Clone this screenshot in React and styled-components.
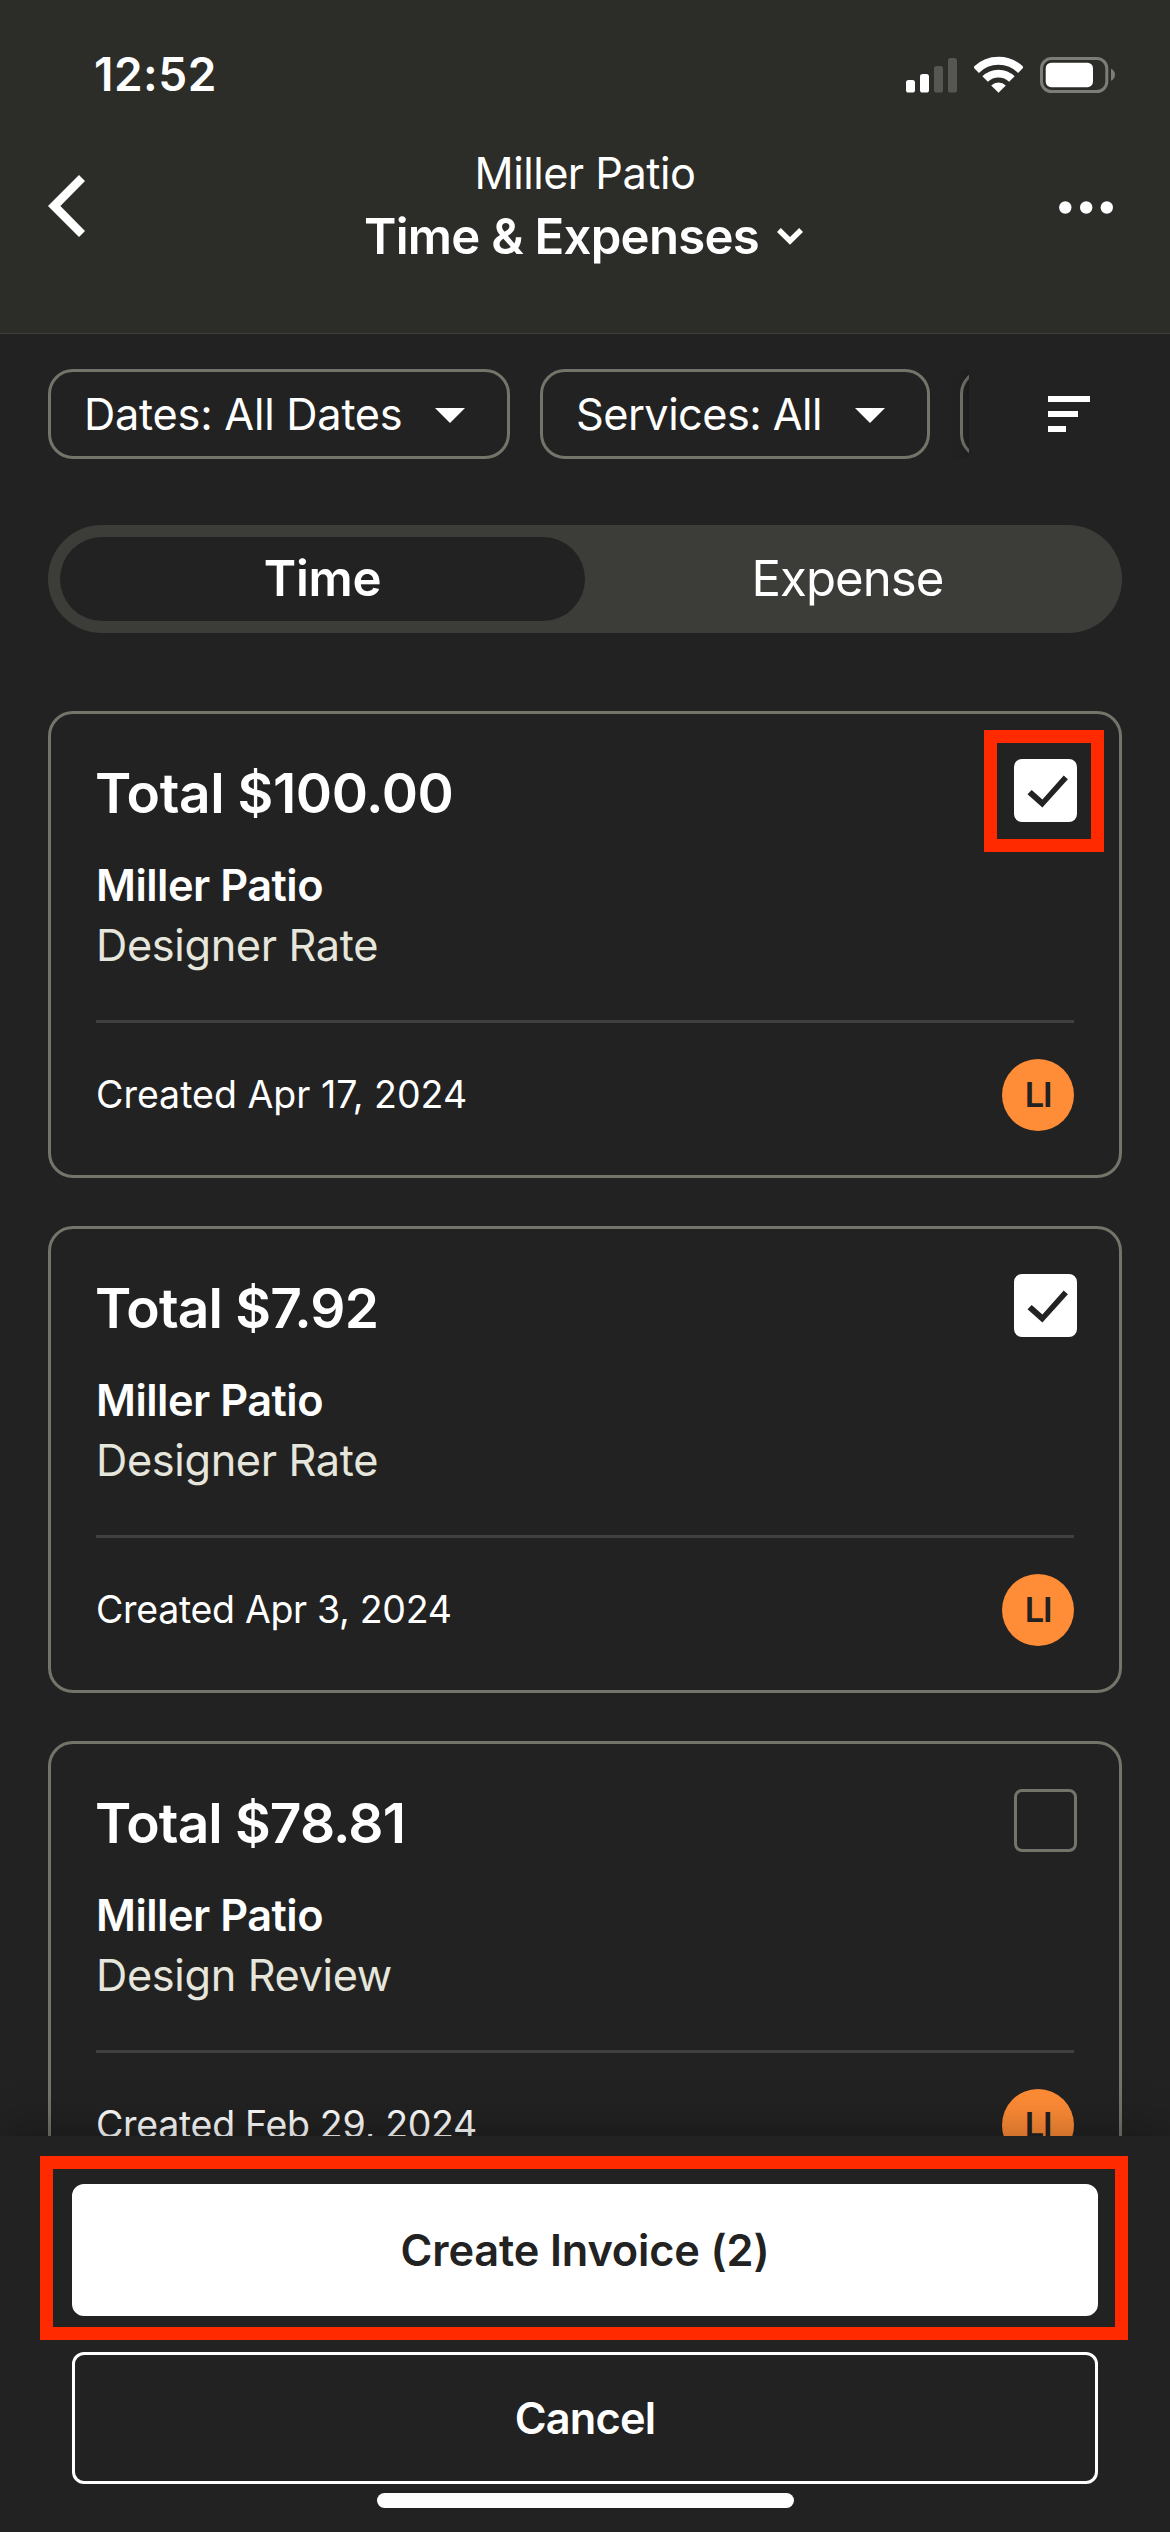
import React from 'react';
import styled, { createGlobalStyle, css } from 'styled-components';

const color = {
  page: '#222222',
  header: '#2c2c29',
  headerLine: '#3f3f3a',
  outline: '#74746b',
  track: '#3c3c38',
  divider: '#40403f',
  muted: '#e6e6dc',
  avatar: '#ff8c36',
  highlight: '#ff2a00',
};

const GlobalStyle = createGlobalStyle`
  *, *::before, *::after { box-sizing: border-box; }
  body {
    margin: 0;
    background: ${color.page};
    color: #fff;
    font-family: Inter, 'Liberation Sans', sans-serif;
  }
  button {
    font: inherit;
    color: inherit;
    background: none;
    border: 0;
    padding: 0;
    margin: 0;
  }
`;

const Screen = styled.div`
  display: flex;
  flex-direction: column;
  width: 1170px;
  height: 2532px;
  overflow: hidden;
  background: ${color.page};
`;

const Label = styled.span`
  display: block;
  font-size: ${p => p.$size || 43.3}px;
  font-weight: ${p => (p.$bold ? 600 : 400)};
  letter-spacing: ${p => p.$track || 0}px;
  line-height: ${p => (p.$line ? `${p.$line}px` : '1.2')};
  color: ${p => p.$color || 'inherit'};
  white-space: nowrap;
`;

/* Header */
const Header = styled.header`
  flex: none;
  height: 334px;
  background: ${color.header};
  border-bottom: 1px solid ${color.headerLine};
`;

const StatusBar = styled.div`
  display: flex;
  align-items: center;
  justify-content: space-between;
  height: 141px;
  padding: 8px 55px 0 94px;
`;

const StatusIcons = styled.div`
  display: flex;
  align-items: center;
  gap: 17px;
  svg { display: block; }
`;

const NavBar = styled.nav`
  display: grid;
  grid-template-columns: 200px 1fr 200px;
  align-items: center;
  height: 130px;
`;

const NavButton = styled.button`
  display: flex;
  justify-content: ${p => (p.$end ? 'flex-end' : 'flex-start')};
  padding: ${p => (p.$end ? '2px 57px 0 0' : '0 0 0 48px')};
`;

const NavTitle = styled.div`
  display: flex;
  flex-direction: column;
  align-items: center;
  padding-bottom: 3px;
`;

const NavMenu = styled.button`
  display: flex;
  align-items: center;
  gap: 18px;
  margin-left: -3px;
`;

/* Filters */
const FilterRow = styled.div`
  flex: none;
  display: flex;
  height: 90px;
  margin-top: 35px;
  padding-left: 48px;
  overflow: hidden;
`;

const ChipScroller = styled.div`
  display: flex;
  gap: 30px;
  width: 921px;
  overflow: hidden;
`;

const Chip = styled.button`
  flex: none;
  display: flex;
  align-items: center;
  justify-content: space-between;
  width: ${p => p.$width}px;
  height: 90px;
  padding: 2px 42px 0 33px;
  border: 3px solid ${color.outline};
  border-radius: 25px;
`;

const SortButton = styled.button`
  flex: 1;
  display: flex;
  align-items: center;
  padding-left: 79px;
  background: ${color.page};
  box-shadow: 0 0 15px rgba(0, 0, 0, 0.35);
`;

/* Segmented control */
const Segmented = styled.div`
  flex: none;
  display: flex;
  height: 108px;
  margin: 66px 48px 78px;
  padding: 12px;
  border-radius: 54px;
  background: ${color.track};
`;

const Segment = styled.button`
  flex: 1;
  display: flex;
  align-items: center;
  justify-content: center;
  padding-bottom: 1px;
  border-radius: 42px;
  ${p => p.$active && css`background: ${color.page};`}
`;

/* Cards */
const List = styled.main`
  flex: 1;
  min-height: 0;
  display: flex;
  flex-direction: column;
  gap: 48px;
  padding: 0 48px;
  overflow: hidden;
`;

const Card = styled.article`
  flex: none;
  display: flex;
  flex-direction: column;
  padding: 45px 45px 44px;
  border: 3px solid ${color.outline};
  border-radius: 25px;
`;

const CardTop = styled.div`
  display: flex;
  align-items: flex-start;
  justify-content: space-between;
  height: 96px;
  margin: 0 -3px 0 -1px;
`;

const CardFooter = styled.div`
  display: flex;
  align-items: center;
  justify-content: space-between;
  margin-top: 45px;
  padding-top: 36px;
  border-top: 3px solid ${color.divider};
`;

const Checkbox = styled.span`
  position: relative;
  display: grid;
  place-items: center;
  width: 63px;
  height: 63px;
  border: 3px solid ${p => (p.$checked ? '#fff' : color.outline)};
  border-radius: 8px;
  background: ${p => (p.$checked ? '#fff' : 'transparent')};
`;

const Avatar = styled.span`
  display: grid;
  place-items: center;
  width: 72px;
  height: 72px;
  border-radius: 50%;
  background: ${color.avatar};
`;

const Highlight = styled.span`
  position: absolute;
  inset: ${p => p.$inset};
  border: 13px solid ${color.highlight};
  pointer-events: none;
`;

/* Bottom actions */
const ActionBar = styled.footer`
  position: relative;
  flex: none;
  display: flex;
  flex-direction: column;
  align-items: center;
  height: 396px;
  padding: 48px 72px 0;
  background: ${color.page};
  box-shadow: 0 0 48px rgba(0, 0, 0, 0.36);
`;

const ActionButton = styled.button`
  position: relative;
  display: flex;
  align-items: center;
  justify-content: center;
  width: 100%;
  height: 132px;
  padding-top: 2px;
  border: 3px solid #fff;
  border-radius: 12px;
  ${p =>
    p.$primary
      ? css`
          background: #fff;
          color: ${color.page};
          margin-bottom: 36px;
        `
      : css`
          margin-bottom: 9px;
        `}
`;

const HomeIndicator = styled.div`
  width: 417px;
  height: 15px;
  border-radius: 8px;
  background: #fff;
`;

const SignalIcon = () => (
  <svg width="51" height="36" viewBox="0 0 51 36">
    <rect x="0" y="23" width="9" height="12.5" rx="2.6" fill="#fff" />
    <rect x="14" y="17" width="9" height="18.5" rx="2.6" fill="#fff" />
    <rect x="28" y="9" width="9" height="26.5" rx="2.6" fill="#565653" />
    <rect x="42" y="1" width="9" height="34.5" rx="2.6" fill="#565653" />
  </svg>
);

const WifiIcon = () => (
  <svg width="49" height="37" viewBox="0 0 49 37">
    <g fill="none" stroke="#fff">
      <path d="M2.1 14.1A31.7 31.7 0 0 1 46.9 14.1" strokeWidth="8" />
      <path d="M11.1 23.1A18.9 18.9 0 0 1 37.9 23.1" strokeWidth="7.8" />
    </g>
    <path d="M24.5 36.8L17.2 29.4A10.4 10.4 0 0 1 31.8 29.4Z" fill="#fff" />
  </svg>
);

const BatteryIcon = () => (
  <svg width="75" height="36" viewBox="0 0 75 36">
    <rect x="1.5" y="1.5" width="65.3" height="33" rx="10" fill="none" stroke="#7c7c79" strokeWidth="3" />
    <rect x="5.7" y="5.7" width="47.3" height="24.5" rx="5.5" fill="#fff" />
    <path d="M71 11.7C73.6 12.8 75 15 75 17.7S73.6 22.6 71 23.7Z" fill="#7c7c79" />
  </svg>
);

const BackIcon = () => (
  <svg width="37" height="62" viewBox="0 0 37 62">
    <path d="M31 0L37 6L12.4 31L37 56L31 62L0 31Z" fill="#fff" />
  </svg>
);

const MoreIcon = () => (
  <svg width="55" height="13" viewBox="0 0 55 13">
    <circle cx="7.3" cy="6.5" r="6.2" fill="#fff" />
    <circle cx="28.2" cy="6.5" r="6.2" fill="#fff" />
    <circle cx="48.8" cy="6.5" r="6.2" fill="#fff" />
  </svg>
);

const ChevronDownIcon = () => (
  <svg width="26" height="17" viewBox="0 0 26 17">
    <path d="M3.8 0L13 9L22.2 0L26 4L13 16.8L0 4Z" fill="#fff" />
  </svg>
);

const CaretIcon = () => (
  <svg width="30" height="15" viewBox="0 0 30 15">
    <path d="M0 0H30L15 15Z" fill="#fff" />
  </svg>
);

const SortIcon = () => (
  <svg width="42" height="36" viewBox="0 0 42 36">
    <path d="M0 0H42V6H0ZM0 15H30V21H0ZM0 30H18V36H0Z" fill="#fff" />
  </svg>
);

const CheckIcon = () => (
  <svg width="57" height="57" viewBox="0 0 57 57">
    <path d="M10.5 32.3L14.7 28L25.4 37.4L46.7 13.4L50.9 17.3L25.4 45.4Z" fill={color.page} />
  </svg>
);

const entries = [
  { total: 'Total $100.00', totalTrack: -0.4, service: 'Designer Rate', date: 'Created Apr 17, 2024', dateTrack: 0, checked: true, marked: true },
  { total: 'Total $7.92', totalTrack: -0.8, service: 'Designer Rate', date: 'Created Apr 3, 2024', dateTrack: -0.32, checked: true },
  { total: 'Total $78.81', totalTrack: -0.85, service: 'Design Review', date: 'Created Feb 29, 2024', dateTrack: -0.3, checked: false },
];

function EntryCard({ entry }) {
  return (
    <Card>
      <CardTop>
        <Label $bold $size={55} $line={68} $track={entry.totalTrack}>{entry.total}</Label>
        <Checkbox $checked={entry.checked}>
          {entry.checked && <CheckIcon />}
          {entry.marked && <Highlight $inset="-32px -30px -33px -33px" />}
        </Checkbox>
      </CardTop>
      <Label $bold $line={60} $track={-0.5}>Miller Patio</Label>
      <Label $line={60} $track={-0.35} $color={color.muted}>{entry.service}</Label>
      <CardFooter>
        <Label $size={37.5} $line={44} $track={entry.dateTrack}>{entry.date}</Label>
        <Avatar>
          <Label $bold $size={34.5} $track={-1.2} $color={color.page}>LI</Label>
        </Avatar>
      </CardFooter>
    </Card>
  );
}

export default function App() {
  return (
    <>
      <GlobalStyle />
      <Screen>
        <Header>
          <StatusBar>
            <Label $bold $size={46} $track={0.5}>12:52</Label>
            <StatusIcons>
              <SignalIcon />
              <WifiIcon />
              <BatteryIcon />
            </StatusIcons>
          </StatusBar>
          <NavBar>
            <NavButton aria-label="Back"><BackIcon /></NavButton>
            <NavTitle>
              <Label $line={63} $track={-0.5}>Miller Patio</Label>
              <NavMenu>
                <Label $bold $size={49.1} $line={63} $track={-0.75}>Time &amp; Expenses</Label>
                <ChevronDownIcon />
              </NavMenu>
            </NavTitle>
            <NavButton $end aria-label="More"><MoreIcon /></NavButton>
          </NavBar>
        </Header>

        <FilterRow>
          <ChipScroller>
            <Chip $width={462}>
              <Label $track={-0.25}>Dates: All Dates</Label>
              <CaretIcon />
            </Chip>
            <Chip $width={390}>
              <Label $track={-0.55}>Services: All</Label>
              <CaretIcon />
            </Chip>
            <Chip $width={300} />
          </ChipScroller>
          <SortButton aria-label="Sort"><SortIcon /></SortButton>
        </FilterRow>

        <Segmented>
          <Segment $active><Label $bold $size={49.1} $track={-0.3}>Time</Label></Segment>
          <Segment><Label $size={49.1} $track={-0.95}>Expense</Label></Segment>
        </Segmented>

        <List>
          {entries.map(entry => <EntryCard key={entry.total} entry={entry} />)}
        </List>

        <ActionBar>
          <ActionButton $primary>
            <Label $bold $track={-0.15}>Create Invoice (2)</Label>
            <Highlight $inset="-31px -33px -27px -35px" />
          </ActionButton>
          <ActionButton>
            <Label $bold $track={-0.8}>Cancel</Label>
          </ActionButton>
          <HomeIndicator />
        </ActionBar>
      </Screen>
    </>
  );
}
